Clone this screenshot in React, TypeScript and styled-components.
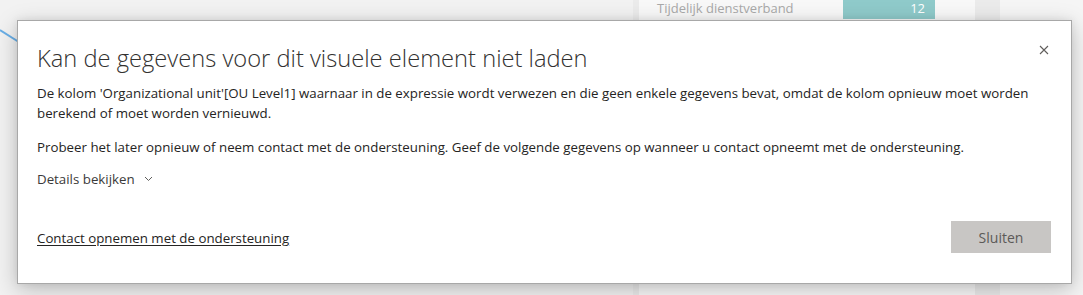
import React from "react";
import styled, { createGlobalStyle } from "styled-components";

const Global = createGlobalStyle`
  html, body { margin: 0; padding: 0; }
  body {
    width: 1083px;
    height: 295px;
    overflow: hidden;
    background: #f0f0f0;
    font-family: "Open Sans", "Noto Sans", sans-serif;
  }
`;

const Page = styled.div`
  position: relative;
  width: 1083px;
  height: 295px;
  display: grid;
  grid-template-columns: 633px 342px 25px 1fr;
  background: #f0f0f0;
  overflow: hidden;
`;

const ChartArea = styled.div`
  background: #f2f2f2;
`;

const ChartLine = styled.svg`
  display: block;
`;

const TablePanel = styled.div`
  background: #f8f8f8;
  border-left: 6px solid #ebebeb;
  display: flex;
  flex-direction: column;
`;

const TableRow = styled.div`
  height: 19px;
  display: grid;
  grid-template-columns: 1fr 92px 40px;
  align-items: stretch;
`;

const RowLabel = styled.div`
  padding-left: 18px;
  font-size: 13px;
  line-height: 16px;
  color: #a9a9a9;
`;

const RowBar = styled.div`
  background: #8fcaca;
  color: #ffffff;
  font-size: 13px;
  line-height: 16px;
  text-align: right;
  padding-right: 10px;
`;

const Strip = styled.div`
  background: #ebebeb;
`;

const RightArea = styled.div`
  background: #f5f5f5;
`;

const Dialog = styled.div`
  position: absolute;
  left: 17px;
  top: 20px;
  width: 1055px;
  height: 264px;
  background: #ffffff;
  border: 1px solid #a8a8a8;
  box-shadow: 0 6px 22px rgba(0, 0, 0, 0.22), 0 0 8px rgba(0, 0, 0, 0.08);
  display: flex;
  flex-direction: column;
  padding: 21px 20px 30px 19px;
  box-sizing: border-box;
  color: #252423;
`;

const Header = styled.div`
  display: flex;
  justify-content: space-between;
  align-items: flex-start;
`;

const Title = styled.h1`
  margin: 0;
  font-family: "Open Sans", "Noto Sans", sans-serif;
  font-weight: 300;
  font-size: 23.7px;
  line-height: 32px;
  color: #323130;
`;

const CloseButton = styled.button`
  border: none;
  background: transparent;
  padding: 0;
  margin: 1px 0 0 0;
  width: 14px;
  height: 14px;
  display: flex;
  align-items: center;
  justify-content: center;
  cursor: pointer;
`;

const Body = styled.div`
  margin-top: 9px;
  font-size: 13.3px;
  line-height: 20px;
  color: #252423;
`;

const Para = styled.p`
  margin: 0 0 14px 0;
`;

const Details = styled.div`
  display: flex;
  align-items: center;
  gap: 9px;
  font-size: 13.3px;
  line-height: 20px;
  color: #3b3a39;
  margin-top: -2px;
`;

const Footer = styled.div`
  margin-top: auto;
  display: flex;
  justify-content: space-between;
  align-items: center;
`;

const SupportLink = styled.a`
  font-size: 13.3px;
  color: #252423;
  text-decoration: underline;
  text-underline-offset: 2px;
  cursor: pointer;
  margin-top: 2px;
`;

const CloseAction = styled.button`
  width: 100px;
  height: 32px;
  border: none;
  background: #c8c6c4;
  color: #5c5a58;
  font-family: "Open Sans", "Noto Sans", sans-serif;
  font-size: 14px;
`;

export default function App() {
  return (
    <>
      <Global />
      <Page>
        <ChartArea>
          <ChartLine width="40" height="60" viewBox="0 0 40 60">
            <path d="M0 30 L22 44" stroke="#69aee6" strokeWidth="2" fill="none" />
          </ChartLine>
        </ChartArea>
        <TablePanel>
          <TableRow>
            <RowLabel>Tijdelijk dienstverband</RowLabel>
            <RowBar>12</RowBar>
            <div />
          </TableRow>
        </TablePanel>
        <Strip />
        <RightArea />
        <Dialog role="dialog">
          <Header>
            <Title>Kan de gegevens voor dit visuele element niet laden</Title>
            <CloseButton aria-label="Sluiten">
              <svg width="10" height="10" viewBox="0 0 10 10">
                <path d="M1 1 L9 9 M9 1 L1 9" stroke="#605e5c" strokeWidth="1.1" fill="none" />
              </svg>
            </CloseButton>
          </Header>
          <Body>
            <Para>
              De kolom 'Organizational unit'[OU Level1] waarnaar in de expressie wordt verwezen en die geen enkele gegevens bevat, omdat de kolom opnieuw moet worden berekend of moet worden vernieuwd.
            </Para>
            <Para>
              Probeer het later opnieuw of neem contact met de ondersteuning. Geef de volgende gegevens op wanneer u contact opneemt met de ondersteuning.
            </Para>
          </Body>
          <Details>
            Details bekijken
            <svg width="9" height="6" viewBox="0 0 9 6">
              <path d="M1 1 L4.5 4.5 L8 1" stroke="#605e5c" strokeWidth="1" fill="none" />
            </svg>
          </Details>
          <Footer>
            <SupportLink>Contact opnemen met de ondersteuning</SupportLink>
            <CloseAction>Sluiten</CloseAction>
          </Footer>
        </Dialog>
      </Page>
    </>
  );
}
